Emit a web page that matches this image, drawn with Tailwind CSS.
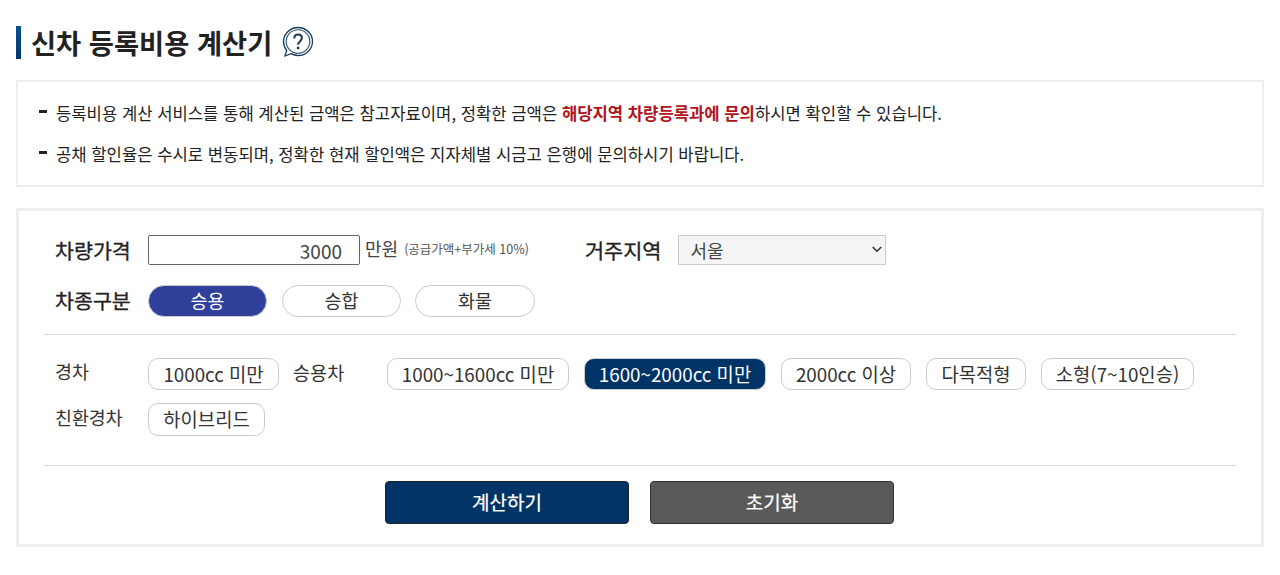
<!DOCTYPE html>
<html lang="ko">
<head>
  <meta charset="UTF-8" />
  <title>신차 등록비용 계산기</title>
  <script src="https://cdn.jsdelivr.net/npm/@tailwindcss/browser@4"></script>
</head>
<body class="bg-white text-[#222] font-['Noto_Sans_CJK_KR','Noto_Sans',sans-serif] overflow-hidden">
  <div class="w-[1280px] h-[575px] px-4 pt-[26px]">
    <!-- 제목 -->
    <div class="flex items-center h-[33px]">
      <span class="w-[5px] h-[33px] bg-gradient-to-b from-[#0a4f94] to-[#06356b]"></span>
      <h1 class="ml-[10px] text-[27.3px] leading-[33px] font-bold text-[#222] mt-[-1px]">신차 등록비용 계산기</h1>
      <svg class="ml-[10px] mt-[-2px]" width="32" height="32" viewBox="0 0 32 32" fill="none">
        <path d="M16 1.500C8 1.500 1.500 8 1.500 15.500c0 3.500 1.200 6.500 3.200 9l-1.700 5.500 6-2.300c2.100 1.100 4.500 1.800 7 1.800 8 0 14.500-6.200 14.500-14S24 1.500 16 1.500z" stroke="#1d3a52" stroke-width="1.300"/>
        <circle cx="16" cy="15.500" r="11.800" stroke="#1d4f78" stroke-width="1.100"/>
        <path d="M12.300 12.500c0-2.300 1.600-4 3.800-4s3.800 1.500 3.800 3.600c0 3-3.800 3.300-3.800 6.700" stroke="#1d3a52" stroke-width="2"/>
        <circle cx="16.100" cy="22" r="1.400" fill="#1d3a52"/>
      </svg>
    </div>

    <!-- 안내 -->
    <div class="mt-[21px] h-[107px] border-2 border-[#eeeeee] pl-[21px] pt-[19px] text-[16.65px] leading-[24px] text-[#222]">
      <p class="flex items-center h-[24px]"><span class="w-[8px] h-[3px] bg-[#222] mr-[9px] mb-[3px]"></span><span>등록비용 계산 서비스를 통해 계산된 금액은 참고자료이며, 정확한 금액은 <b class="font-bold text-[#b0141c]">해당지역 차량등록과에 문의</b>하시면 확인할 수 있습니다.</span></p>
      <p class="flex items-center h-[24px] mt-[17px]"><span class="w-[8px] h-[3px] bg-[#222] mr-[9px] mb-[3px]"></span><span>공채 할인율은 수시로 변동되며, 정확한 현재 할인액은 지자체별 시금고 은행에 문의하시기 바랍니다.</span></p>
    </div>

    <!-- 계산 폼 -->
    <div class="mt-[21px] h-[339px] border-[3px] border-[#eeeeee] px-[25px]">
      <div class="flex items-center pt-[24px] h-[54px] pl-[11px]">
        <span class="w-[93px] text-[20.6px] leading-[26px] [-webkit-text-stroke:0.35px_#222]">차량가격</span>
        <input type="text" value="3000" class="w-[212px] h-[30px] border border-[#666] rounded-[2px] bg-white text-right text-[19px] text-[#444] pr-[17px]" />
        <span class="ml-[5px] text-[18px] text-[#444] mb-[4px]">만원</span>
        <span class="ml-[6px] text-[12.5px] text-[#555] mb-[2px]">(공급가액+부가세 10%)</span>
        <span class="ml-[56px] text-[20.8px] leading-[26px] [-webkit-text-stroke:0.35px_#222]">거주지역</span>
        <div class="relative ml-[17px]">
          <select class="block appearance-none w-[208px] h-[30px] border border-[#cccccc] bg-[#f5f5f5] text-[18px] text-[#444] pl-[11px]">
            <option>서울</option>
          </select>
          <svg class="absolute right-[4px] top-[11px]" width="10" height="7" viewBox="0 0 10 7" fill="none"><path d="M0.8 1l4.200 4.200L9.200 1" stroke="#333" stroke-width="1.600"/></svg>
        </div>
      </div>
      <div class="flex items-center h-[32px] mt-[20px] pl-[11px]">
        <span class="w-[93px] text-[20.6px] leading-[26px] mb-[2px] [-webkit-text-stroke:0.35px_#222]">차종구분</span>
        <button class="w-[119px] h-[32px] rounded-full border border-[#cccccc] bg-[#30409a] text-white text-[18.5px]">승용</button>
        <button class="ml-[15px] w-[119px] h-[32px] rounded-full border border-[#cccccc] bg-white text-[#333] text-[18.5px]">승합</button>
        <button class="ml-[14px] w-[120px] h-[32px] rounded-full border border-[#cccccc] bg-white text-[#333] text-[18.5px]">화물</button>
      </div>
      <div class="mt-[17px] border-t border-[#dddddd] pt-[23px] pl-[11px] h-[131px]">
        <div class="flex items-center h-[32px]">
          <span class="w-[93px] text-[18.4px] text-[#333] mb-[4px]">경차</span>
          <button class="w-[131px] h-[32px] rounded-[10px] border border-[#cccccc] bg-white text-[#333] text-[18.8px]">1000cc 미만</button>
          <span class="ml-[14px] w-[94px] text-[18.6px] text-[#333] mb-[4px]">승용차</span>
          <button class="w-[182px] h-[32px] rounded-[10px] border border-[#cccccc] bg-white text-[#333] text-[18.8px]">1000~1600cc 미만</button>
          <button class="ml-[15px] w-[182px] h-[32px] rounded-[10px] border border-[#cccccc] bg-[#003366] text-white text-[18.8px]">1600~2000cc 미만</button>
          <button class="ml-[15px] w-[130px] h-[32px] rounded-[10px] border border-[#cccccc] bg-white text-[#333] text-[18.8px]">2000cc 이상</button>
          <button class="ml-[15px] w-[100px] h-[32px] rounded-[10px] border border-[#cccccc] bg-white text-[#333] text-[18.8px]">다목적형</button>
          <button class="ml-[15px] w-[153px] h-[32px] rounded-[10px] border border-[#cccccc] bg-white text-[#333] text-[18.8px]">소형(7~10인승)</button>
        </div>
        <div class="flex items-center h-[33px] mt-[13px]">
          <span class="w-[93px] text-[18.4px] text-[#333] mb-[4px]">친환경차</span>
          <button class="w-[117px] h-[33px] rounded-[10px] border border-[#cccccc] bg-white text-[#333] text-[18.8px]">하이브리드</button>
        </div>
      </div>
      <div class="border-t border-[#dddddd] pt-[15px] flex justify-center gap-[21px] pr-[1px]">
        <button class="w-[244px] h-[43px] rounded-[4px] border border-[#222] bg-[#003366] text-white text-[19px] [-webkit-text-stroke:0.25px_#fff]">계산하기</button>
        <button class="w-[244px] h-[43px] rounded-[4px] border border-[#333] bg-[#595959] text-white text-[19px] [-webkit-text-stroke:0.25px_#fff]">초기화</button>
      </div>
    </div>
  </div>
</body>
</html>
